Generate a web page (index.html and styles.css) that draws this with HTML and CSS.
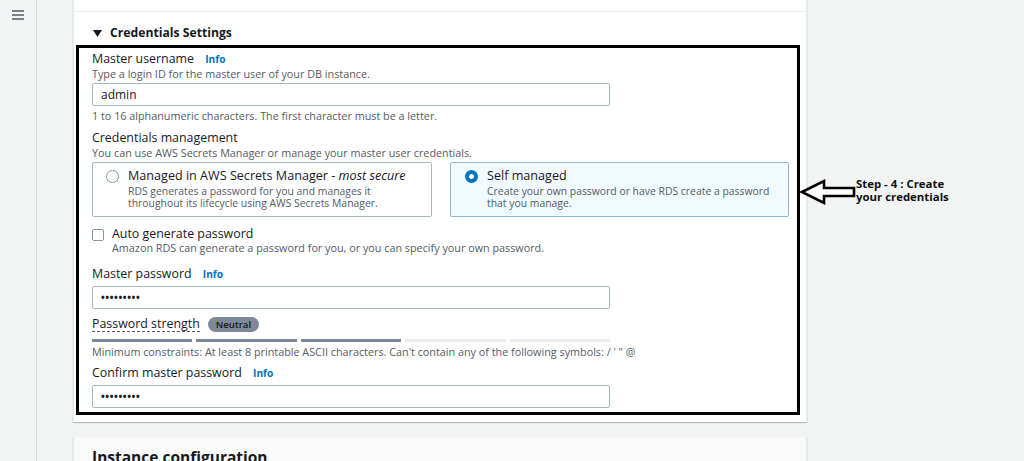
FILE: index.html
```html
<!DOCTYPE html>
<html>
<head>
<meta charset="utf-8">
<link rel="stylesheet" href="styles.css">
</head>
<body>
<div class="layout">
  <nav class="sidenav">
    <svg class="hamburger" width="14" height="12" viewBox="0 0 14 12"><path d="M1 2h12M1 6h12M1 10h12" stroke="#545b64" stroke-width="1.6"/></svg>
  </nav>
  <main class="main">
    <section class="card">
      <div class="card-prev"></div>
      <div class="expander"><svg class="caret" width="9" height="7" viewBox="0 0 9 7"><path d="M0 0h9L4.5 7z" fill="#16191f"/></svg>Credentials Settings</div>
      <div class="highlight">
        <div class="field">
          <div class="label">Master username <a class="info">Info</a></div>
          <div class="desc">Type a login ID for the master user of your DB instance.</div>
          <div class="input">admin</div>
          <div class="hint">1 to 16 alphanumeric characters. The first character must be a letter.</div>
        </div>
        <div class="field cm">
          <div class="label">Credentials management</div>
          <div class="desc">You can use AWS Secrets Manager or manage your master user credentials.</div>
          <div class="tiles">
            <div class="tile">
              <span class="radio"></span>
              <div class="tile-body">
                <div class="tile-title">Managed in AWS Secrets Manager - <em>most secure</em></div>
                <div class="tile-desc">RDS generates a password for you and manages it<br>throughout its lifecycle using AWS Secrets Manager.</div>
              </div>
            </div>
            <div class="tile selected">
              <span class="radio checked"></span>
              <div class="tile-body">
                <div class="tile-title">Self managed</div>
                <div class="tile-desc">Create your own password or have RDS create a password<br>that you manage.</div>
              </div>
            </div>
          </div>
        </div>
        <div class="check-row">
          <span class="checkbox"></span>
          <div>
            <div class="check-title">Auto generate password</div>
            <div class="desc">Amazon RDS can generate a password for you, or you can specify your own password.</div>
          </div>
        </div>
        <div class="field pw">
          <div class="label">Master password <a class="info">Info</a></div>
          <div class="input dots">•••••••••</div>
          <div class="strength">
            <span class="strength-label">Password strength</span>
            <span class="badge">Neutral</span>
          </div>
          <div class="bars">
            <span class="bar on"></span><span class="bar on"></span><span class="bar on"></span><span class="bar"></span><span class="bar"></span>
          </div>
          <div class="hint">Minimum constraints: At least 8 printable ASCII characters. Can't contain any of the following symbols: / ' " @</div>
        </div>
        <div class="field confirm">
          <div class="label">Confirm master password <a class="info">Info</a></div>
          <div class="input dots">•••••••••</div>
        </div>
      </div>
    </section>
    <section class="card next">
      <h2 class="next-title">Instance configuration</h2>
    </section>
    <div class="annotation">
      <svg class="arrow" width="58" height="28" viewBox="0 0 58 28"><path d="M2 14 L24 3 L24 10 L54 10 L54 18 L24 18 L24 25 Z" fill="#fff" stroke="#000" stroke-width="2.6" stroke-linejoin="miter"/></svg>
      <div class="step-text">Step - 4 : Create<br>your credentials</div>
    </div>
  </main>
</div>
</body>
</html>
```

FILE: styles.css
```css
* { box-sizing: border-box; }
html, body { margin: 0; padding: 0; }
body {
  background: #f2f3f3;
  font-family: "Open Sans", "Noto Sans", sans-serif;
  color: #16191f;
  width: 1024px;
  height: 461px;
  overflow: hidden;
}
.layout { display: flex; height: 461px; }
.sidenav {
  width: 37px;
  flex: none;
  background: #f2f3f3;
  border-right: 1px solid #dadddf;
  padding: 9px 0 0 11px;
}
.hamburger { display: block; }
.main {
  position: relative;
  flex: 1;
  padding-left: 36px;
}
.card {
  width: 734px;
  background: #fff;
  border-left: 1px solid #e7eaea;
  border-right: 1px solid #e7eaea;
  box-shadow: 0 1px 1px rgba(0,28,36,0.25);
  padding: 0 6px 7px 2px;
}
.card-prev { height: 12px; border-bottom: 1px solid #eaeded; margin: 0 -6px 0 -2px; }
.expander {
  display: block;
  height: 33px;
  padding: 14px 0 0 17px;
  font-size: 12.2px;
  font-weight: 700;
  color: #16191f;
  line-height: 14px;
}
.caret { display: inline-block; margin-right: 8px; vertical-align: 0px; }
.highlight {
  border: 3px solid #000;
  padding: 3px 5px 4px 13px;
}
.label { font-size: 12.4px; line-height: 16px; }
.info { color: #0073bb; font-weight: 700; font-size: 10.2px; margin-left: 8px; }
.desc { font-size: 10.8px; color: #545b64; line-height: 13px; }
.hint { font-size: 10.8px; color: #545b64; line-height: 13px; margin-top: 3px; }
.input {
  width: 518px;
  height: 23px;
  border: 1px solid #aab7b8;
  border-radius: 2px;
  margin-top: 3px;
  font-size: 12px;
  padding: 0 8px;
  line-height: 21px;
}
.dots { font-size: 10px; letter-spacing: 0.6px; font-weight: 700; }
.cm { margin-top: 8px; }
.tiles { display: flex; gap: 18px; margin-top: 3px; }
.tile {
  width: 340px;
  height: 55px;
  flex: none;
  border: 1px solid #aab7b8;
  border-radius: 2px;
  display: flex;
  padding: 6px 0 0 13px;
}
.tile.selected { width: 339px; background: #f1faff; border-color: #8fb8d4; padding-left: 14px; }
.radio {
  width: 13px; height: 13px; border-radius: 50%;
  border: 1px solid #879596;
  margin: 1px 9px 0 0;
  flex: none;
  background: #fff;
}
.radio.checked { border: 4px solid #0073bb; }
.tile-title { font-size: 12.6px; line-height: 14px; }
.tile-desc { font-size: 10.4px; color: #545b64; line-height: 12px; margin-top: 2px; }
.check-row { display: flex; margin-top: 10px; }
.checkbox {
  width: 12px; height: 12px; border: 1px solid #879596; border-radius: 2px;
  margin: 2px 8px 0 0; flex: none;
}
.check-title { font-size: 12.4px; line-height: 14px; }
.pw { margin-top: 12px; }
.pw .input { margin-top: 4px; }
.strength { display: flex; align-items: center; margin-top: 7px; height: 17px; }
.strength-label { font-size: 12.4px; border-bottom: 1px dashed #545b64; line-height: 14px; }
.badge {
  margin-left: 8px;
  background: #7d8998;
  color: #16191f;
  font-size: 9.6px;
  font-weight: 600;
  border-radius: 8px;
  padding: 0 8px;
  line-height: 15px;
  height: 15px;
}
.bars { display: flex; gap: 4px; width: 518px; margin-top: 6px; }
.bar { flex: 1; height: 3px; background: #eaeded; }
.bar.on { background: #7d8998; }
.pw .hint { margin-top: 3px; }
.confirm { margin-top: 7px; }
.confirm .input { margin-top: 4px; }
.next { margin-top: 15px; height: 40px; padding: 10px 0 0 18px; background: #fafafa; }
.next-title { margin: 0; font-size: 15.5px; font-weight: 700; color: #16191f; line-height: 20px; }
.annotation {
  position: absolute;
  left: 763px;
  top: 177px;
  display: flex;
  align-items: flex-start;
}
.arrow { display: block; margin-top: 1px; }
.step-text { font-size: 11.4px; font-weight: 700; color: #111; line-height: 13px; margin-left: -2px; }
```
